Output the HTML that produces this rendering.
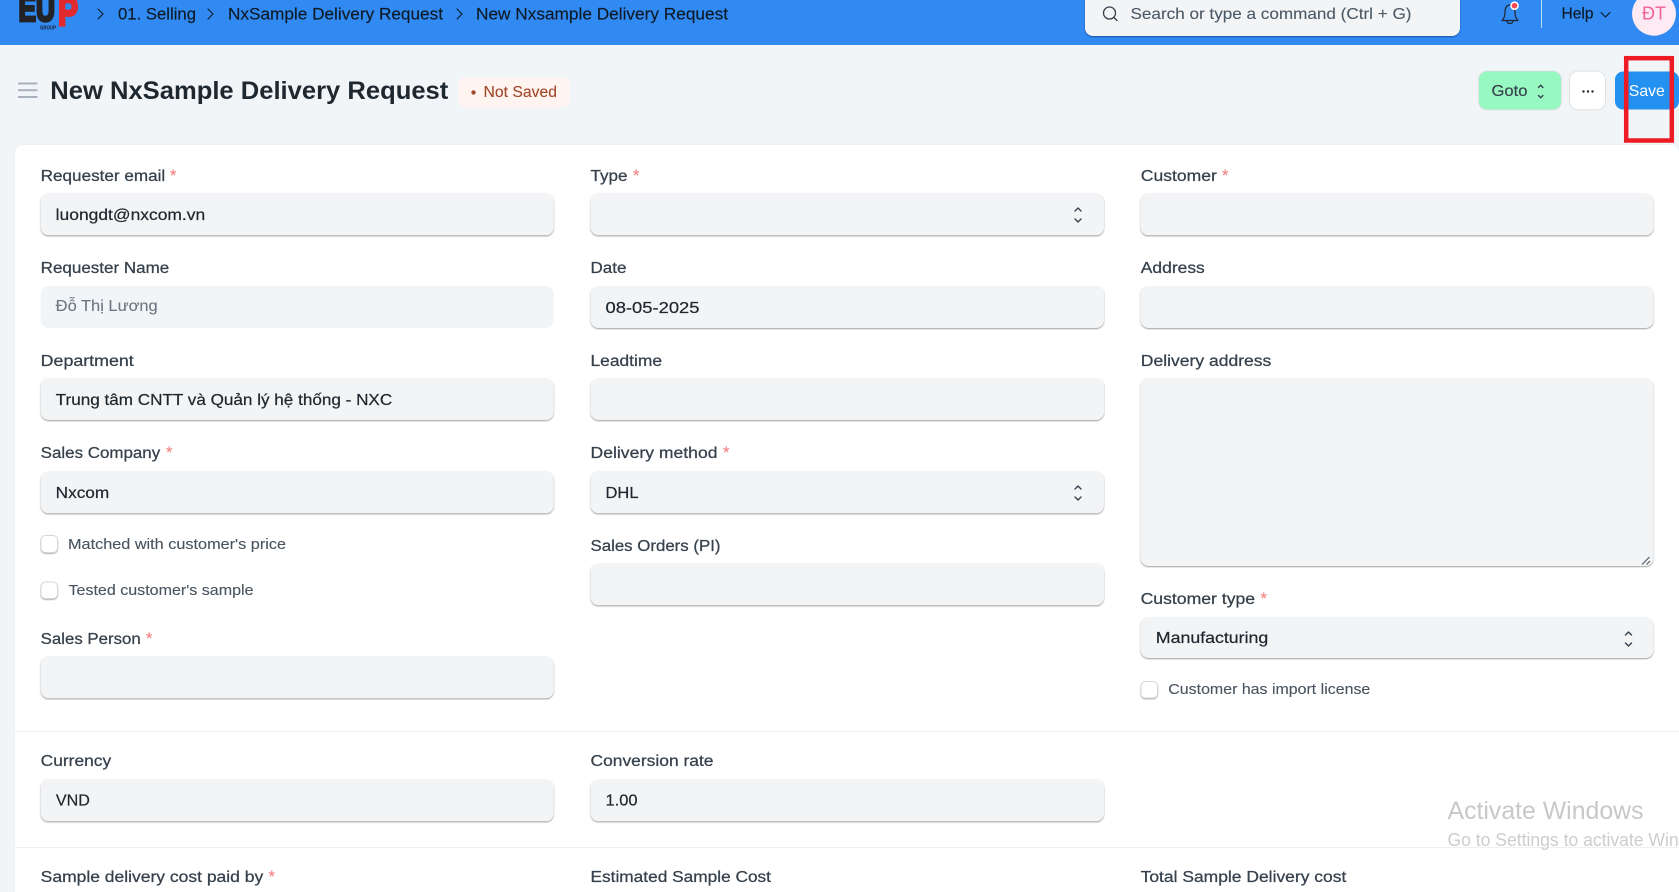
<!DOCTYPE html>
<html lang="en">
<head>
<meta charset="utf-8">
<title>New NxSample Delivery Request</title>
<style>
html,body{margin:0;padding:0;width:1679px;height:892px;overflow:hidden;background:#f3f5f8}
svg{display:block;font-family:"Liberation Sans","DejaVu Sans",sans-serif}
.lb{font-size:15.5px;fill:#36414c;stroke:#36414c;stroke-width:.25}
.in{font-size:15.5px;fill:#1f272e;stroke:#1f272e;stroke-width:.22}
.st{font-size:16.5px;fill:#f58a8a;stroke:#f58a8a;stroke-width:.2}
.ck{font-size:14.5px;fill:#4a5560;stroke:#4a5560;stroke-width:.12}
.bc{font-size:16.5px;fill:#0e1a26;stroke:#0e1a26;stroke-width:.15}
.box{fill:#f3f4f6;filter:drop-shadow(.5px 1.4px .7px rgba(0,0,0,.38))}
.cb{fill:#fff;stroke:#d3d6da;stroke-width:1;filter:drop-shadow(0 1px .6px rgba(0,0,0,.3))}
.chev{fill:none;stroke:#36414c;stroke-width:1.4;stroke-linecap:round;stroke-linejoin:round}
</style>
</head>
<body>
<svg width="1679" height="892" viewBox="0 0 1679 892" xmlns="http://www.w3.org/2000/svg">
<!-- page -->
<rect width="1679" height="892" fill="#f2f5f8"/>

<!-- navbar -->
<rect width="1679" height="45" fill="#3189f2"/>
<text x="18.500" y="21" font-size="36" font-weight="700" fill="#222327" stroke="#222327" stroke-width="2.800" textLength="36.500" lengthAdjust="spacingAndGlyphs">EU</text>
<text x="58" y="25" font-size="40" font-weight="700" fill="#e2292d" stroke="#e2292d" stroke-width="2.800" textLength="20" lengthAdjust="spacingAndGlyphs">P</text>
<text x="40" y="29.500" font-size="5.500" font-weight="700" fill="#1b2330" textLength="16" lengthAdjust="spacingAndGlyphs">GROUP</text>

<g fill="none" stroke="#0e1a26" stroke-width="1.100" stroke-linecap="round" stroke-linejoin="round">
<path d="M98 9l5 5-5 5"/>
<path d="M208 9l5 5-5 5"/>
<path d="M457 9l5 5-5 5"/>
</g>
<text class="bc" x="118" y="19.500" textLength="78" lengthAdjust="spacingAndGlyphs">01. Selling</text>
<text class="bc" x="228" y="19.500" textLength="215" lengthAdjust="spacingAndGlyphs">NxSample Delivery Request</text>
<text class="bc" x="476" y="19.500" textLength="252" lengthAdjust="spacingAndGlyphs">New Nxsample Delivery Request</text>

<!-- search -->
<path d="M1085 -8H1460V28a8 8 0 0 1-8 8H1093a8 8 0 0 1-8-8Z" fill="#f3f4f6" style="filter:drop-shadow(.5px 1.4px .7px rgba(0,40,100,.55))"/>
<g fill="none" stroke="#36414c" stroke-width="1.300" stroke-linecap="round">
<circle cx="1109.500" cy="13" r="6"/>
<path d="M1114 17.500l3 3"/>
</g>
<text x="1130.500" y="19" font-size="16" fill="#4c5a67" stroke="#4c5a67" stroke-width=".12" textLength="281" lengthAdjust="spacingAndGlyphs">Search or type a command (Ctrl + G)</text>

<!-- bell -->
<g fill="none" stroke="#1f272e" stroke-width="1.200" stroke-linecap="round" stroke-linejoin="round">
<path d="M1502 20.500c2.500-2.500 3-5 3-9 0-4 2-6.500 5-6.500s5 2.500 5 6.500c0 4 .5 6.500 3 9Z"/>
<path d="M1507 20.500c0 2 1.300 3 3 3s3-1 3-3"/>
</g>
<circle cx="1514.500" cy="5.700" r="4.300" fill="#fff"/>
<circle cx="1514.500" cy="5.700" r="2.800" fill="#f5484f"/>
<rect x="1541" y="0" width="1" height="28" fill="#c3dbf9"/>
<text x="1561.500" y="18.500" font-size="16" fill="#0e1a26" stroke="#0e1a26" stroke-width=".15" textLength="32" lengthAdjust="spacingAndGlyphs">Help</text>
<path d="M1601 12.500l4.500 4.500 4.500-4.500" fill="none" stroke="#0e1a26" stroke-width="1.100" stroke-linecap="round" stroke-linejoin="round"/>
<circle cx="1654" cy="13.700" r="22" fill="#fdeaf2"/>
<text x="1642" y="19.500" font-size="18" fill="#f0609a" textLength="24" lengthAdjust="spacingAndGlyphs">ĐT</text>

<!-- page head -->
<g fill="#a9b2ba">
<rect x="18" y="82.500" width="19.500" height="2"/>
<rect x="18" y="89.200" width="19.500" height="2"/>
<rect x="18" y="96" width="19.500" height="2"/>
</g>
<text x="50.300" y="99" font-size="25" font-weight="700" fill="#1f272e" textLength="398" lengthAdjust="spacingAndGlyphs">New NxSample Delivery Request</text>
<rect x="458.500" y="77.300" width="111" height="30" rx="7" fill="#fff4f0"/>
<circle cx="473.500" cy="92.500" r="2.200" fill="#a0492a"/>
<text x="483.500" y="97" font-size="15.500" fill="#a0492a" stroke="#a0492a" stroke-width=".12" textLength="73.500" lengthAdjust="spacingAndGlyphs">Not Saved</text>

<!-- buttons -->
<rect x="1479" y="71.500" width="82" height="38" rx="8" fill="#98f8c2" style="filter:drop-shadow(0 .5px .8px rgba(0,0,0,.3))"/>
<text x="1491.500" y="96" font-size="16" fill="#36414c" stroke="#36414c" stroke-width=".15" textLength="36" lengthAdjust="spacingAndGlyphs">Goto</text>
<path class="chev" d="M1538.500 87.500l2.200-2.200 2.200 2.200M1538.500 95.500l2.200 2.200 2.200-2.200"/>
<rect x="1570" y="71.500" width="35" height="38" rx="8" fill="#fff" style="filter:drop-shadow(0 .5px .8px rgba(0,0,0,.3))"/>
<g fill="#1f272e"><circle cx="1583.500" cy="91.500" r="1.200"/><circle cx="1588" cy="91.500" r="1.200"/><circle cx="1592.500" cy="91.500" r="1.200"/></g>
<rect x="1615" y="71.500" width="64" height="38" rx="8" fill="#2490ef"/>
<text x="1628.800" y="96" font-size="16" fill="#fff" textLength="36" lengthAdjust="spacingAndGlyphs">Save</text>

<!-- card -->
<path d="M15 153a8 8 0 0 1 8-8H1671a8 8 0 0 1 8 8V900H15Z" fill="#fff" style="filter:drop-shadow(0 0 .6px rgba(0,0,0,.06))"/>

<!-- red highlight -->
<rect x="1626.200" y="58.200" width="45.600" height="82.300" fill="none" stroke="#ed1c24" stroke-width="4.500"/>

<!-- column 1 -->
<text class="lb" x="40.700" y="181" textLength="124.500" lengthAdjust="spacingAndGlyphs">Requester email</text>
<text class="st" x="170" y="181">*</text>
<rect class="box" x="40.700" y="193.300" width="513" height="42" rx="8"/>
<text class="in" x="55.700" y="220" textLength="149.500" lengthAdjust="spacingAndGlyphs">luongdt@nxcom.vn</text>

<text class="lb" x="40.700" y="273" textLength="128.500" lengthAdjust="spacingAndGlyphs">Requester Name</text>
<rect x="40.700" y="286" width="513" height="42" rx="8" fill="#f2f5f8"/>
<text x="55.700" y="311" font-size="15.500" fill="#6c7680" stroke="#6c7680" stroke-width=".1" textLength="102" lengthAdjust="spacingAndGlyphs">Đỗ Thị Lương</text>

<text class="lb" x="40.700" y="366" textLength="93" lengthAdjust="spacingAndGlyphs">Department</text>
<rect class="box" x="40.700" y="378" width="513" height="42" rx="8"/>
<text class="in" x="55.700" y="405" textLength="336.500" lengthAdjust="spacingAndGlyphs">Trung tâm CNTT và Quản lý hệ thống - NXC</text>

<text class="lb" x="40.700" y="458" textLength="119.500" lengthAdjust="spacingAndGlyphs">Sales Company</text>
<text class="st" x="166" y="458">*</text>
<rect class="box" x="40.700" y="471.300" width="513" height="42" rx="8"/>
<text class="in" x="55.700" y="498" textLength="53.500" lengthAdjust="spacingAndGlyphs">Nxcom</text>

<rect class="cb" x="41" y="535.500" width="16.500" height="17" rx="4.500"/>
<text class="ck" x="68" y="549" textLength="218" lengthAdjust="spacingAndGlyphs">Matched with customer's price</text>
<rect class="cb" x="41" y="582" width="16.500" height="16.500" rx="4.500"/>
<text class="ck" x="68.500" y="595" textLength="185" lengthAdjust="spacingAndGlyphs">Tested customer's sample</text>

<text class="lb" x="40.700" y="644" textLength="100" lengthAdjust="spacingAndGlyphs">Sales Person</text>
<text class="st" x="146" y="644">*</text>
<rect class="box" x="40.700" y="656.300" width="513" height="42" rx="8"/>

<text class="lb" x="40.700" y="766" textLength="70.500" lengthAdjust="spacingAndGlyphs">Currency</text>
<rect class="box" x="40.700" y="779.300" width="513" height="42" rx="8"/>
<text class="in" x="55.900" y="805.500" textLength="34" lengthAdjust="spacingAndGlyphs">VND</text>

<text class="lb" x="40.700" y="882" textLength="222.500" lengthAdjust="spacingAndGlyphs">Sample delivery cost paid by</text>
<text class="st" x="268.500" y="882">*</text>

<!-- column 2 -->
<text class="lb" x="590.500" y="181" textLength="37" lengthAdjust="spacingAndGlyphs">Type</text>
<text class="st" x="633" y="181">*</text>
<rect class="box" x="590.500" y="193.300" width="513.500" height="42" rx="8"/>
<path class="chev" d="M1075 211l3-3 3 3M1075 219l3 3 3-3"/>

<text class="lb" x="590.500" y="273" textLength="36" lengthAdjust="spacingAndGlyphs">Date</text>
<rect class="box" x="590.500" y="286" width="513.500" height="42" rx="8"/>
<text class="in" x="605.500" y="313" textLength="94" lengthAdjust="spacingAndGlyphs">08-05-2025</text>

<text class="lb" x="590.500" y="366" textLength="71.500" lengthAdjust="spacingAndGlyphs">Leadtime</text>
<rect class="box" x="590.500" y="378" width="513.500" height="42" rx="8"/>

<text class="lb" x="590.500" y="458" textLength="127" lengthAdjust="spacingAndGlyphs">Delivery method</text>
<text class="st" x="723" y="458">*</text>
<rect class="box" x="590.500" y="471.300" width="513.500" height="42" rx="8"/>
<text class="in" x="605.500" y="498" textLength="33" lengthAdjust="spacingAndGlyphs">DHL</text>
<path class="chev" d="M1075 489l3-3 3 3M1075 497l3 3 3-3"/>

<text class="lb" x="590.500" y="551" textLength="130" lengthAdjust="spacingAndGlyphs">Sales Orders (PI)</text>
<rect class="box" x="590.500" y="563.300" width="513.500" height="42" rx="8"/>

<text class="lb" x="590.500" y="766" textLength="123" lengthAdjust="spacingAndGlyphs">Conversion rate</text>
<rect class="box" x="590.500" y="779.300" width="513.500" height="42" rx="8"/>
<text class="in" x="605.500" y="805.500" textLength="32" lengthAdjust="spacingAndGlyphs">1.00</text>

<text class="lb" x="590.500" y="882" textLength="180.500" lengthAdjust="spacingAndGlyphs">Estimated Sample Cost</text>

<!-- column 3 -->
<text class="lb" x="1140.800" y="181" textLength="76" lengthAdjust="spacingAndGlyphs">Customer</text>
<text class="st" x="1222" y="181">*</text>
<rect class="box" x="1140.500" y="193.300" width="513" height="42" rx="8"/>

<text class="lb" x="1140.800" y="273" textLength="64" lengthAdjust="spacingAndGlyphs">Address</text>
<rect class="box" x="1140.500" y="286" width="513" height="42" rx="8"/>

<text class="lb" x="1140.800" y="366" textLength="130.500" lengthAdjust="spacingAndGlyphs">Delivery address</text>
<rect class="box" x="1140.500" y="378" width="513" height="188" rx="8"/>
<path d="M1642 564.500l7.500-7.500M1646.500 564.500l3.500-3.500" fill="none" stroke="#4a5560" stroke-width="1.100"/>

<text class="lb" x="1140.600" y="604" textLength="114.500" lengthAdjust="spacingAndGlyphs">Customer type</text>
<text class="st" x="1260.500" y="604">*</text>
<rect class="box" x="1140.500" y="617" width="513" height="41" rx="8"/>
<text class="in" x="1155.800" y="643" textLength="112.500" lengthAdjust="spacingAndGlyphs">Manufacturing</text>
<path class="chev" d="M1625.500 635l3-3 3 3M1625.500 643l3 3 3-3"/>

<rect class="cb" x="1141" y="681.500" width="16.500" height="16.500" rx="4.500"/>
<text class="ck" x="1168.300" y="694" textLength="202" lengthAdjust="spacingAndGlyphs">Customer has import license</text>

<text class="lb" x="1140.600" y="882" textLength="205.700" lengthAdjust="spacingAndGlyphs">Total Sample Delivery cost</text>

<!-- dividers -->
<rect x="15" y="731" width="1664" height="1" fill="#eef0f2"/>
<rect x="15" y="847" width="1664" height="1" fill="#eef0f2"/>

<!-- activation watermark -->
<text x="1447.500" y="819" font-size="25" fill="#c8c8c8" textLength="196" lengthAdjust="spacingAndGlyphs">Activate Windows</text>
<text x="1447.500" y="846" font-size="18" fill="#cdcdcd" textLength="277" lengthAdjust="spacingAndGlyphs">Go to Settings to activate Windows.</text>
</svg>
</body>
</html>
